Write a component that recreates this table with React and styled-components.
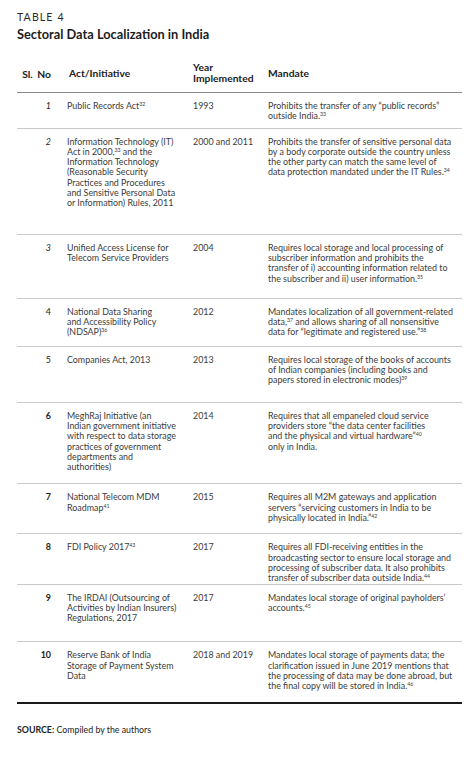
import React from 'react'
import styled, { createGlobalStyle } from 'styled-components'

const GlobalStyle = createGlobalStyle`
  html, body {
    margin: 0;
    padding: 0;
    background: #fff;
  }
  body {
    font-family: Lato, "Open Sans", "Liberation Sans", sans-serif;
    color: #3b3b3b;
  }
`

const Page = styled.div`
  width: 474px;
  box-sizing: border-box;
  padding: 11px 12px 30px 17px;
`

const Kicker = styled.div`
  font-size: 10.6px;
  letter-spacing: 1.1px;
  line-height: 12px;
  color: #2a2a2a;
`

const Title = styled.h1`
  margin: 4px 0 0;
  font-size: 12.8px;
  font-weight: 700;
  line-height: 15px;
  color: #1c1c1c;
`

const Table = styled.div`
  width: 445px;
  margin-top: 20px;
  border-bottom: 2px solid #1a1a1a;
`

const grid = `
  display: grid;
  grid-template-columns: 50px 126px 75px 1fr;
`

const HeaderRow = styled.div`
  ${grid}
  align-items: center;
  padding-bottom: 8px;
  border-bottom: 1px solid #8a8a8a;
`

const HeadCell = styled.div`
  font-size: 10.3px;
  font-weight: 700;
  line-height: 11px;
  color: #222;
  padding-left: ${(p) => p.$shift || 0}px;
`

const HeadNo = styled(HeadCell)`
  text-align: right;
  padding-right: 16px;
  word-spacing: 2px;
  padding-top: 2px;
`

const Row = styled.div`
  ${grid}
  align-items: start;
  padding: 8px 0 ${(p) => p.$pb}px;
  & + & {
    border-top: 1px solid #c9c9c9;
  }
`

const Cell = styled.div`
  font-size: 8.9px;
  line-height: 10.3px;
  color: #3b3b3b;
  white-space: nowrap;
`

const NoCell = styled(Cell)`
  text-align: right;
  padding-right: 16px;
  color: #222;
  font-style: ${(p) => (p.$variant === 'italic' ? 'italic' : 'normal')};
  font-weight: ${(p) => (p.$variant === 'bold' ? 700 : 400)};
`

const Sup = styled.sup`
  font-size: 5.2px;
  line-height: 0;
  vertical-align: 3px;
`

const Source = styled.div`
  margin-top: 21px;
  font-size: 8.8px;
  line-height: 10px;
  color: #222;
  b {
    font-weight: 700;
  }
`

const rows = [
  {
    no: '1', style: 'italic',
    act: <>Public Records Act<Sup>32</Sup></>,
    year: '1993',
    mandate: <>Prohibits the transfer of any “public records”<br />outside India.<Sup>33</Sup></>,
    pb: 6,
  },
  {
    no: '2', style: 'italic',
    act: <>Information Technology (IT)<br />Act in 2000,<Sup>33</Sup> and the<br />Information Technology<br />(Reasonable Security<br />Practices and Procedures<br />and Sensitive Personal Data<br />or Information) Rules, 2011</>,
    year: '2000 and 2011',
    mandate: <>Prohibits the transfer of sensitive personal data<br />by a body corporate outside the country unless<br />the other party can match the same level of<br />data protection mandated under the IT Rules.<Sup>34</Sup></>,
    pb: 25,
  },
  {
    no: '3', style: 'italic',
    act: <>Unified Access License for<br />Telecom Service Providers</>,
    year: '2004',
    mandate: <>Requires local storage and local processing of<br />subscriber information and prohibits the<br />transfer of i) accounting information related to<br />the subscriber and ii) user information.<Sup>35</Sup></>,
    pb: 14,
  },
  {
    no: '4', style: 'normal',
    act: <>National Data Sharing<br />and Accessibility Policy<br />(NDSAP)<Sup>36</Sup></>,
    year: '2012',
    mandate: <>Mandates localization of all government-related<br />data,<Sup>37</Sup> and allows sharing of all nonsensitive<br />data for “legitimate and registered use.”<Sup>38</Sup></>,
    pb: 8,
  },
  {
    no: '5', style: 'normal',
    act: <>Companies Act, 2013</>,
    year: '2013',
    mandate: <>Requires local storage of the books of accounts<br />of Indian companies (including books and<br />papers stored in electronic modes)<Sup>39</Sup></>,
    pb: 16,
  },
  {
    no: '6', style: 'bold',
    act: <>MeghRaj Initiative (an<br />Indian government initiative<br />with respect to data storage<br />practices of government<br />departments and<br />authorities)</>,
    year: '2014',
    mandate: <>Requires that all empaneled cloud service<br />providers store “the data center facilities<br />and the physical and virtual hardware”<Sup>40</Sup><br />only in India.</>,
    pb: 11,
  },
  {
    no: '7', style: 'bold',
    act: <>National Telecom MDM<br />Roadmap<Sup>41</Sup></>,
    year: '2015',
    mandate: <>Requires all M2M gateways and application<br />servers “servicing customers in India to be<br />physically located in India.”<Sup>42</Sup></>,
    pb: 10,
  },
  {
    no: '8', style: 'bold',
    act: <>FDI Policy 2017<Sup>43</Sup></>,
    year: '2017',
    mandate: <>Requires all FDI-receiving entities in the<br />broadcasting sector to ensure local storage and<br />processing of subscriber data. It also prohibits<br />transfer of subscriber data outside India.<Sup>44</Sup></>,
    pb: 0,
  },
  {
    no: '9', style: 'bold',
    act: <>The IRDAI (Outsourcing of<br />Activities by Indian Insurers)<br />Regulations, 2017</>,
    year: '2017',
    mandate: <>Mandates local storage of original payholders’<br />accounts.<Sup>45</Sup></>,
    pb: 18,
  },
  {
    no: '10', style: 'bold',
    act: <>Reserve Bank of India<br />Storage of Payment System<br />Data</>,
    year: '2018 and 2019',
    mandate: <>Mandates local storage of payments data; the<br />clarification issued in June 2019 mentions that<br />the processing of data may be done abroad, but<br />the final copy will be stored in India.<Sup>46</Sup></>,
    pb: 10,
  },
]

export default function App() {
  return (
    <Page>
      <GlobalStyle />
      <Kicker>TABLE 4</Kicker>
      <Title>Sectoral Data Localization in India</Title>
      <Table>
        <HeaderRow>
          <HeadNo>Sl. No</HeadNo>
          <HeadCell $shift={2}>Act/Initiative</HeadCell>
          <HeadCell>Year<br />Implemented</HeadCell>
          <HeadCell>Mandate</HeadCell>
        </HeaderRow>
        {rows.map((r) => (
          <Row key={r.no} $pb={r.pb}>
            <NoCell $variant={r.style}>{r.no}</NoCell>
            <Cell>{r.act}</Cell>
            <Cell>{r.year}</Cell>
            <Cell>{r.mandate}</Cell>
          </Row>
        ))}
      </Table>
      <Source><b>SOURCE:</b> Compiled by the authors</Source>
    </Page>
  )
}
